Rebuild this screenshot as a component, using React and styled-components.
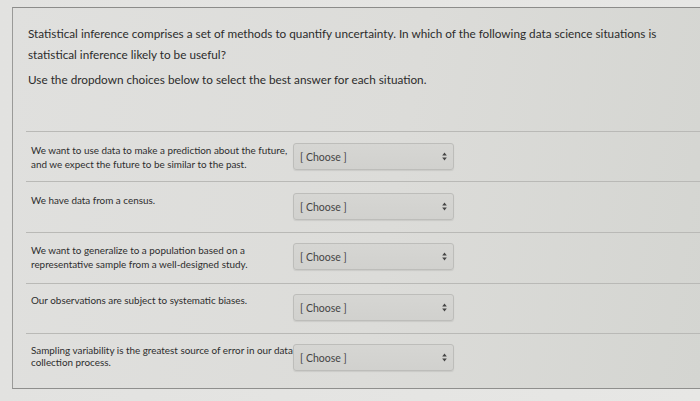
import React from "react";
import styled, { createGlobalStyle } from "styled-components";

const GlobalStyle = createGlobalStyle`
  html, body {
    margin: 0;
    padding: 0;
    background: #e9e9e7;
  }
  body {
    font-family: Lato, "Open Sans", "Liberation Sans", sans-serif;
    color: #2f2f2f;
  }
`;

const Page = styled.div`
  width: 700px;
  height: 401px;
  overflow: hidden;
  padding: 7px 0 0 12px;
  box-sizing: border-box;
  background: linear-gradient(90deg, #e2e2e0 0%, #e7e7e5 100%);
`;

const Panel = styled.div`
  height: 382px;
  box-sizing: border-box;
  border-top: 1px solid #8c8c8a;
  border-left: 1px solid #9a9a98;
  border-bottom: 1px solid #8f8f8d;
  background: linear-gradient(100deg, #e0e0de 0%, #dcdcd9 55%, #d4d5d1 100%);
  padding: 15px 0 0 15px;
`;

const Prompt = styled.p`
  margin: 0 0 4px;
  font-size: 11.75px;
  line-height: 21px;
  color: #2c2c2c;
  width: 650px;
`;

const Rows = styled.div`
  margin-top: 41px;
  margin-left: -2px;
`;

const Row = styled.div`
  display: grid;
  grid-template-columns: 262px 161px;
  align-items: start;
  height: ${(p) => p.$h}px;
  box-sizing: border-box;
  border-top: 1px solid #b9b9b6;
  padding: 10px 0 0 5px;
`;

const Situation = styled.div`
  width: 264px;
  font-size: 9.9px;
  line-height: ${(p) => p.$lh}px;
  color: #2d2d2d;
  padding-top: ${(p) => p.$top}px;
`;

const Select = styled.div`
  grid-column: 2;
  margin-top: ${(p) => p.$top}px;
  height: 27px;
  box-sizing: border-box;
  border: 1px solid #bdbdba;
  border-radius: 3px;
  background: linear-gradient(180deg, #d6d6d3 0%, #d1d1ce 100%);
  box-shadow: 0 1px 1px rgba(0, 0, 0, 0.08);
  display: flex;
  align-items: center;
  justify-content: space-between;
  padding: 0 6px 0 6px;
  font-size: 10.5px;
  color: #444;
`;

const Arrows = () => (
  <svg width="5" height="9" viewBox="0 0 5 9">
    <path d="M2.5 0.5 L4.8 3.6 L0.2 3.6 Z" fill="#444" />
    <path d="M2.5 8.5 L4.8 5.4 L0.2 5.4 Z" fill="#444" />
  </svg>
);

const Dropdown = ({ top }) => (
  <Select $top={top}>
    <span>[ Choose ]</span>
    <Arrows />
  </Select>
);

const items = [
  {
    text: "We want to use data to make a prediction about the future, and we expect the future to be similar to the past.",
    h: 50,
    textTop: 2,
    selTop: 1,
    lh: 13.5,
  },
  { text: "We have data from a census.", h: 51, textTop: 2, selTop: 1, lh: 13.5 },
  {
    text: "We want to generalize to a population based on a representative sample from a well-designed study.",
    h: 51,
    textTop: 0,
    selTop: 0,
    lh: 14,
  },
  { text: "Our observations are subject to systematic biases.", h: 50, textTop: 0, selTop: 0, lh: 13.5 },
  {
    text: "Sampling variability is the greatest source of error in our data collection process.",
    h: 50,
    textTop: -2,
    selTop: 0,
    lh: 12,
  },
];

export default function App() {
  return (
    <>
      <GlobalStyle />
      <Page>
        <Panel>
          <Prompt>
            Statistical inference comprises a set of methods to quantify uncertainty. In which of
            the following data science situations is statistical inference likely to be useful?
          </Prompt>
          <Prompt>Use the dropdown choices below to select the best answer for each situation.</Prompt>
          <Rows>
            {items.map((it, i) => (
              <Row key={i} $h={it.h}>
                <Situation $top={it.textTop} $lh={it.lh}>
                  {it.text}
                </Situation>
                <Dropdown top={it.selTop} />
              </Row>
            ))}
          </Rows>
        </Panel>
      </Page>
    </>
  );
}
